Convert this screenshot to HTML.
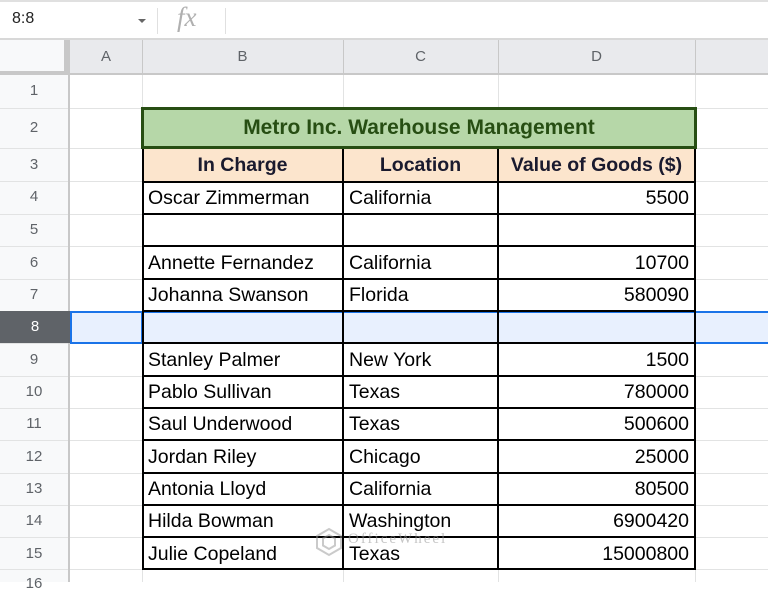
<!DOCTYPE html>
<html><head><style>
*{margin:0;padding:0;box-sizing:border-box}
body{width:768px;height:582px;overflow:hidden;background:#fff;font-family:"Liberation Sans",Arial,sans-serif;position:relative}
.a{position:absolute}
.hl{position:absolute;left:0;width:768px;height:1px;background:#e2e3e3}
.vl{position:absolute;top:75px;width:1px;height:507px;background:#e2e3e3}
.rh{position:absolute;left:0;width:68px;text-align:center;color:#5f6368;font-size:15px}
.c{position:absolute;font-size:19.5px;color:#000;white-space:nowrap;line-height:32px}
</style></head><body>
<div class="a" style="left:0;top:0;width:768px;height:3px;background:#fff;border-top:2px solid #e0e0e0"></div>
<div class="a" style="left:12px;top:10px;font-size:16px;color:#222">8:8</div>
<div class="a" style="left:138px;top:19px;width:0;height:0;border-left:4px solid transparent;border-right:4px solid transparent;border-top:4px solid #666"></div>
<div class="a" style="left:157px;top:8px;width:1px;height:26px;background:#e0e0e0"></div>
<div class="a" style="left:177px;top:2px;font-family:'Liberation Serif',serif;font-style:italic;font-size:27px;color:#b0b0b0">fx</div>
<div class="a" style="left:225px;top:8px;width:1px;height:26px;background:#e0e0e0"></div>
<div class="a" style="left:0;top:38px;width:768px;height:37px;background:#f8f9fa;border-top:2px solid #d8d8d8;border-bottom:2px solid #c8c8c8"></div>
<div class="a" style="left:70px;top:40px;width:698px;height:35px;background:#e9eaed;border-bottom:2px solid #c8c8c8"></div>
<div class="a" style="left:0;top:40px;width:64px;height:31px;background:#f8f9fa"></div>
<div class="a" style="left:64px;top:40px;width:6px;height:35px;background:#c8c8c8"></div>
<div class="a" style="left:0;top:71px;width:70px;height:4px;background:#c8c8c8"></div>
<div class="a" style="left:142px;top:40px;width:1px;height:35px;background:#c8c8c8"></div>
<div class="a" style="left:343px;top:40px;width:1px;height:35px;background:#c8c8c8"></div>
<div class="a" style="left:498px;top:40px;width:1px;height:35px;background:#c8c8c8"></div>
<div class="a" style="left:695px;top:40px;width:1px;height:35px;background:#c8c8c8"></div>
<div class="a" style="left:70px;top:48px;width:72px;text-align:center;color:#5f6368;font-size:15px">A</div>
<div class="a" style="left:142px;top:48px;width:201px;text-align:center;color:#5f6368;font-size:15px">B</div>
<div class="a" style="left:343px;top:48px;width:155px;text-align:center;color:#5f6368;font-size:15px">C</div>
<div class="a" style="left:498px;top:48px;width:197px;text-align:center;color:#5f6368;font-size:15px">D</div>
<div class="a" style="left:0;top:75px;width:70px;height:507px;background:#f8f9fa"></div>
<div class="hl" style="top:108px"></div><div class="hl" style="top:148px"></div><div class="hl" style="top:181px"></div><div class="hl" style="top:214px"></div><div class="hl" style="top:246px"></div><div class="hl" style="top:279px"></div><div class="hl" style="top:311px"></div><div class="hl" style="top:343px"></div><div class="hl" style="top:376px"></div><div class="hl" style="top:408px"></div><div class="hl" style="top:440px"></div><div class="hl" style="top:473px"></div><div class="hl" style="top:505px"></div><div class="hl" style="top:537px"></div><div class="hl" style="top:569px"></div>
<div class="vl" style="left:142px"></div><div class="vl" style="left:343px"></div><div class="vl" style="left:498px"></div><div class="vl" style="left:695px"></div>
<div class="a" style="left:68px;top:75px;width:2px;height:507px;background:#c8c8c8"></div>
<div class="rh" style="top:82px">1</div><div class="rh" style="top:119px">2</div><div class="rh" style="top:156px">3</div><div class="rh" style="top:188px">4</div><div class="rh" style="top:221px">5</div><div class="rh" style="top:254px">6</div><div class="rh" style="top:286px">7</div>
<div class="a" style="left:0;top:311px;width:70px;height:32px;background:#5f6368;color:#fff;font-size:15px;text-align:center;line-height:32px">8</div>
<div class="rh" style="top:351px">9</div><div class="rh" style="top:383px">10</div><div class="rh" style="top:415px">11</div><div class="rh" style="top:448px">12</div><div class="rh" style="top:480px">13</div><div class="rh" style="top:512px">14</div><div class="rh" style="top:545px">15</div><div class="rh" style="top:575px">16</div>
<div class="a" style="left:70px;top:311px;width:698px;height:33px;background:#e8f0fe;border-top:2px solid #1a73e8;border-bottom:2px solid #1a73e8"></div>
<div class="a" style="left:70px;top:311px;width:73px;height:33px;border:2px solid #1a73e8"></div>
<div class="a" style="left:141px;top:107px;width:556px;height:42px;background:#b6d7a8;border:3px solid #274e13;color:#274e13;font-weight:bold;font-size:21px;text-align:center;line-height:36px">Metro Inc. Warehouse Management</div>
<div class="a" style="left:142px;top:149px;width:553px;height:32px;background:#fce5cd"></div>
<div class="a" style="left:142px;top:149px;width:554px;height:421px;border:2px solid #000;border-top:none"></div>
<div class="a" style="left:342px;top:149px;width:2px;height:420px;background:#000"></div>
<div class="a" style="left:497px;top:149px;width:2px;height:420px;background:#000"></div>
<div class="a" style="left:142px;top:181px;width:554px;height:2px;background:#000"></div>
<div class="a" style="left:142px;top:213px;width:554px;height:2px;background:#000"></div>
<div class="a" style="left:142px;top:245px;width:554px;height:2px;background:#000"></div>
<div class="a" style="left:142px;top:278px;width:554px;height:2px;background:#000"></div>
<div class="a" style="left:142px;top:310px;width:554px;height:2px;background:#000"></div>
<div class="a" style="left:142px;top:342px;width:554px;height:2px;background:#000"></div>
<div class="a" style="left:142px;top:375px;width:554px;height:2px;background:#000"></div>
<div class="a" style="left:142px;top:407px;width:554px;height:2px;background:#000"></div>
<div class="a" style="left:142px;top:439px;width:554px;height:2px;background:#000"></div>
<div class="a" style="left:142px;top:472px;width:554px;height:2px;background:#000"></div>
<div class="a" style="left:142px;top:504px;width:554px;height:2px;background:#000"></div>
<div class="a" style="left:142px;top:536px;width:554px;height:2px;background:#000"></div>
<div class="c" style="left:142px;top:149px;width:201px;text-align:center;font-weight:bold;color:#1a1a2e">In Charge</div>
<div class="c" style="left:343px;top:149px;width:155px;text-align:center;font-weight:bold;color:#1a1a2e">Location</div>
<div class="c" style="left:498px;top:149px;width:197px;text-align:center;font-weight:bold;color:#1a1a2e">Value of Goods ($)</div>
<div class="c" style="left:148px;top:182px">Oscar Zimmerman</div><div class="c" style="left:349px;top:182px">California</div><div class="c" style="right:79px;top:182px">5500</div>
<div class="c" style="left:148px;top:247px">Annette Fernandez</div><div class="c" style="left:349px;top:247px">California</div><div class="c" style="right:79px;top:247px">10700</div>
<div class="c" style="left:148px;top:279px">Johanna Swanson</div><div class="c" style="left:349px;top:279px">Florida</div><div class="c" style="right:79px;top:279px">580090</div>
<div class="c" style="left:148px;top:344px">Stanley Palmer</div><div class="c" style="left:349px;top:344px">New York</div><div class="c" style="right:79px;top:344px">1500</div>
<div class="c" style="left:148px;top:376px">Pablo Sullivan</div><div class="c" style="left:349px;top:376px">Texas</div><div class="c" style="right:79px;top:376px">780000</div>
<div class="c" style="left:148px;top:408px">Saul Underwood</div><div class="c" style="left:349px;top:408px">Texas</div><div class="c" style="right:79px;top:408px">500600</div>
<div class="c" style="left:148px;top:441px">Jordan Riley</div><div class="c" style="left:349px;top:441px">Chicago</div><div class="c" style="right:79px;top:441px">25000</div>
<div class="c" style="left:148px;top:473px">Antonia Lloyd</div><div class="c" style="left:349px;top:473px">California</div><div class="c" style="right:79px;top:473px">80500</div>
<div class="c" style="left:148px;top:505px">Hilda Bowman</div><div class="c" style="left:349px;top:505px">Washington</div><div class="c" style="right:79px;top:505px">6900420</div>
<div class="c" style="left:148px;top:538px">Julie Copeland</div><div class="c" style="left:349px;top:538px">Texas</div><div class="c" style="right:79px;top:538px">15000800</div>
<div class="a" style="left:348px;top:531px;font-size:15px;letter-spacing:2px;color:rgba(150,150,150,0.55);font-family:'Liberation Serif',serif">OfficeWheel</div>
<svg class="a" style="left:314px;top:527px" width="30" height="30" viewBox="0 0 30 30"><path d="M15 2 L27 9 L27 21 L15 28 L3 21 L3 9 Z M15 8 L21 11.5 L21 18.5 L15 22 L9 18.5 L9 11.5 Z" fill="none" stroke="rgba(150,150,150,0.5)" stroke-width="2"/></svg>
</body></html>
